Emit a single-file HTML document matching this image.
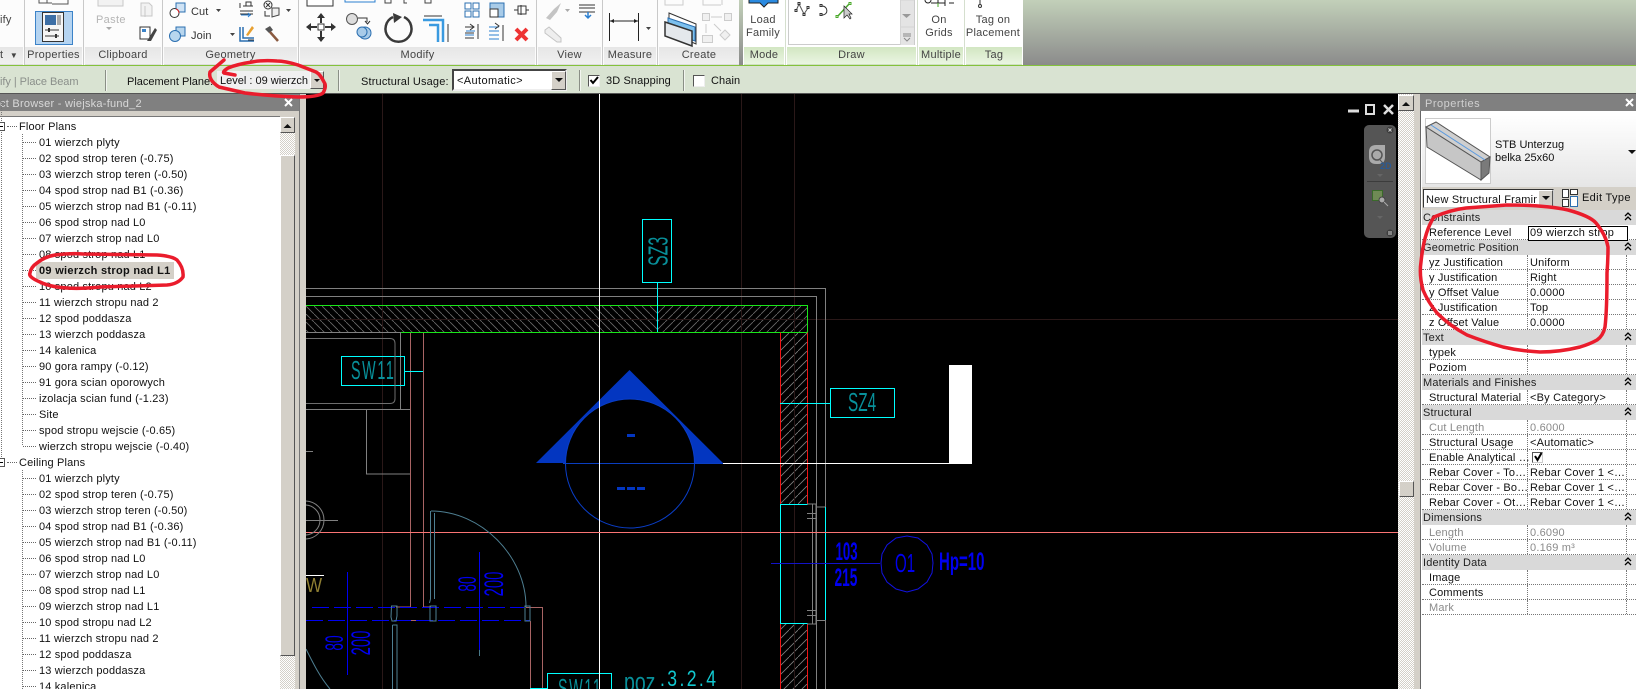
<!DOCTYPE html>
<html><head><meta charset="utf-8"><style>
html,body{margin:0;padding:0;width:1636px;height:689px;overflow:hidden;background:#d4d0c8}
body{position:relative;font:11px/14px "Liberation Sans",sans-serif;letter-spacing:.16px;color:#111}
.a,.p,.l,.x{position:absolute;white-space:nowrap}
.p{top:47px;height:17px;background:linear-gradient(#e6e6e6,#f0f0f0);border-bottom:1px solid #ddd;color:#444;text-align:center;line-height:17px;letter-spacing:.25px}
.g{background:linear-gradient(#d2e6c2,#eaf5e2);border-bottom:1px solid #cfe0c2}
.l{color:#444;transform:translateX(-50%);letter-spacing:.25px}
.sep{position:absolute;top:70px;height:21px;width:1px;background:#8a8f86;border-right:1px solid #f2f5ef}
.dither{position:absolute;background:repeating-conic-gradient(#d4d0c8 0 25%,#fff 0 50%) 0 0/2px 2px}
.btn{position:absolute;background:#d4d0c8;border:1px solid;border-color:#fff #555 #555 #fff;box-sizing:border-box}
.tree{position:absolute;left:0;top:119px;width:280px;height:570px;overflow:hidden}
.t{height:16px;line-height:16px;padding-left:39px;position:relative;white-space:nowrap}
.t:before{content:"";position:absolute;left:23px;top:7px;width:13px;border-top:1px dotted #666}
.h{padding-left:19px}
.h:before{left:7px;width:10px}
.s{background:#d4d0c8;box-shadow:0 -1px 0 #d4d0c8;font-weight:bold;padding:0 3px 0 3px;margin-left:-3px;display:inline-block;letter-spacing:.3px}
.tbl{position:absolute;left:1422px;top:210px;width:214px}
.r{height:15px;position:relative;background:#fff;white-space:nowrap;line-height:17px;box-sizing:border-box;border-bottom:1px dotted #777}
.r.c{background:#d9d9d9;border:0;padding-left:1px;color:#222}
.r i{position:absolute;left:7px;font-style:normal}
.r u{position:absolute;left:105px;width:96px;height:14px;padding-left:2px;border-left:1px dotted #777;border-right:1px dotted #777;text-decoration:none;overflow:hidden;letter-spacing:.2px}
.d{color:#8a8a8a}
</style></head><body>

<!-- ribbon backdrop -->
<div class="a" style="left:0;top:0;width:1636px;height:65px;background:linear-gradient(#c2d0b9,#8b8b8b)"></div>
<div class="a" style="left:0;top:0;width:739px;height:65px;background:#fcfcfc"></div>
<div class="a" style="left:743px;top:0;width:280px;height:65px;background:#fff"></div>
<div class="a" style="left:0;top:65px;width:1636px;height:1px;background:#84c23c"></div>

<!-- panel separators -->
<div class="a" style="left:24px;top:0;width:1px;height:65px;background:#c9c9c9"></div>
<div class="a" style="left:83px;top:0;width:1px;height:65px;background:#c9c9c9"></div>
<div class="a" style="left:162px;top:0;width:1px;height:65px;background:#c9c9c9"></div>
<div class="a" style="left:298px;top:0;width:1px;height:65px;background:#c9c9c9"></div>
<div class="a" style="left:536px;top:0;width:1px;height:65px;background:#c9c9c9"></div>
<div class="a" style="left:602px;top:0;width:1px;height:65px;background:#c9c9c9"></div>
<div class="a" style="left:657px;top:0;width:1px;height:65px;background:#c9c9c9"></div>
<div class="a" style="left:785px;top:0;width:1px;height:65px;background:#d5dfce"></div>
<div class="a" style="left:917px;top:0;width:1px;height:65px;background:#d5dfce"></div>
<div class="a" style="left:964px;top:0;width:1px;height:65px;background:#d5dfce"></div>

<!-- panel labels -->
<div class="p" style="left:0;width:23px;text-align:left">t &nbsp;<span style="font-size:8px">▼</span></div>
<div class="p" style="left:25px;width:57px">Properties</div>
<div class="p" style="left:85px;width:76px">Clipboard</div>
<div class="p" style="left:164px;width:133px">Geometry</div>
<div class="p" style="left:300px;width:235px">Modify</div>
<div class="p" style="left:538px;width:63px">View</div>
<div class="p" style="left:604px;width:52px">Measure</div>
<div class="p" style="left:659px;width:80px">Create</div>
<div class="p g" style="left:744px;width:40px">Mode</div>
<div class="p g" style="left:787px;width:129px">Draw</div>
<div class="p g" style="left:919px;width:44px">Multiple</div>
<div class="p g" style="left:966px;width:56px">Tag</div>

<!-- ribbon texts -->
<div class="x" style="left:0;top:13px;color:#444">ify</div>
<div class="x" style="left:96px;top:13px;color:#b5b5b5;letter-spacing:.35px">Paste</div>
<div class="x" style="left:191px;top:5px;color:#333;letter-spacing:.1px">Cut</div>
<div class="x" style="left:191px;top:29px;color:#333;letter-spacing:.1px">Join</div>
<div class="l" style="left:763px;top:13px">Load</div>
<div class="l" style="left:763px;top:26px">Family</div>
<div class="l" style="left:939px;top:13px">On</div>
<div class="l" style="left:939px;top:26px">Grids</div>
<div class="l" style="left:993px;top:13px">Tag on</div>
<div class="l" style="left:993px;top:26px">Placement</div>

<!-- Draw gallery -->
<div class="a" style="left:788px;top:-2px;width:125px;height:45px;border:1px solid #ccc;background:#fff"></div>
<div class="a" style="left:900px;top:0;width:14px;height:45px;background:#e4e4e4"></div>

<!-- ribbon icons -->
<svg class="a" style="left:0;top:0" width="1030" height="66" viewBox="0 0 1030 66" fill="none">
  <!-- properties -->
  <rect x="35.500" y="11.500" width="37" height="33" fill="#b5d4f1" stroke="#3c83c8"/>
  <rect x="42.500" y="12.500" width="21" height="29" fill="#f5f5f5" stroke="#333"/>
  <rect x="45" y="15" width="11" height="10" fill="#3c6ea5"/>
  <rect x="57" y="15" width="4" height="10" fill="#aaa"/>
  <path d="M45 30h14M45 36h14" stroke="#333"/><rect x="48" y="28" width="2" height="4" fill="#333"/><rect x="55" y="34" width="2" height="4" fill="#333"/>
  <path d="M39 0v3h8v-3M52 4h16v-4M47 3h5" stroke="#555"/>
  <!-- clipboard -->
  <path d="M98 0v6h25v-6" stroke="#c8c8c8" fill="#f2f2f2"/>
  <path d="M109 27l-3 3h6z" fill="#aaa" transform="rotate(180 109 28.500)"/>
  <path d="M141 3h8l3 3v10h-11zM145 6v11" stroke="#c8c8c8" fill="#f2f2f2"/>
  <rect x="140" y="27" width="10" height="12" fill="#fff" stroke="#333"/><rect x="142" y="29" width="4" height="3" fill="#3c83c8"/>
  <path d="M147 41l8-13 2 2-6 11z" fill="#444"/>
  <!-- geometry -->
  <rect x="176" y="3" width="9" height="9" fill="#cfe3f5" stroke="#2b6fb0"/><circle cx="174.500" cy="13" r="4.500" fill="#fff" stroke="#333"/><path d="M176 9a4.500 4.500 0 0 1 3 4" stroke="#d22"/>
  <rect x="176" y="27" width="9" height="9" fill="#b8d6ee" stroke="#2b6fb0"/><circle cx="175" cy="36" r="5.500" fill="#b8d6ee" stroke="#2b6fb0"/>
  <path d="M216 9h5l-2.500 3zM230 33h5l-2.500 3z" fill="#444"/>
  <path d="M240 3v5M243 6h10M240 11h13M240 14h13" stroke="#333"/><path d="M241 15h10M248 13l2 2-2 2" stroke="#2b7fd0"/>
  <rect x="246" y="2" width="5" height="4" stroke="#333"/>
  <circle cx="268" cy="5" r="4" stroke="#333"/><path d="M266 3l4 4M270 3l-4 4M265 11v5h5" stroke="#333"/><path d="M272 8l7 0v7l-7 2z" stroke="#444" fill="#eee"/><path d="M286 9h5l-2.500 3z" fill="#444"/>
  <path d="M240 27v14h14M243 27v11h11" stroke="#2b6fb0" stroke-width="1.500"/><path d="M246 35l6-9 2 2-6 8z" fill="#e8a030"/><path d="M248 40h6" stroke="#333"/>
  <path d="M265 29l5-3 3 4-4 3z" fill="#555"/><path d="M270 32l8 9" stroke="#8a5a40" stroke-width="2.500"/>
  <!-- modify top cut -->
  <path d="M307 0v6h26v-6" stroke="#333" fill="#fff"/>
  <path d="M345 0v2h30v-2" stroke="#2b7fd0"/>
  <path d="M385 0v3h6v-3M404 0v3h3M425 0v3h6v-3" stroke="#444"/>
  <!-- move -->
  <path d="M321 13l4 5h-8zM321 42l4-5h-8zM306 27l5-4v8zM336 27l-5-4v8z" fill="#333"/>
  <path d="M321 17v6M321 31v6M310 27h7M325 27h7" stroke="#333" stroke-width="2"/>
  <rect x="318" y="24" width="6" height="6" fill="#fff" stroke="#333"/>
  <!-- copy -->
  <circle cx="352" cy="19" r="5.500" fill="#ddd" stroke="#555"/><circle cx="365" cy="33" r="6" fill="#a8cbe8" stroke="#2b6fb0"/><circle cx="362" cy="32" r="5" fill="#a8cbe8" stroke="#2b6fb0"/>
  <path d="M358 18h9v4M365 21l2.500 3 2.500-3" stroke="#333"/>
  <!-- rotate -->
  <path d="M404 17a13 13 0 1 1-11 0" stroke="#3a3a3a" stroke-width="2.500"/><path d="M393 13l9 4-8 6z" fill="#3a3a3a"/>
  <!-- trim -->
  <path d="M423 20h20v22M429 25h9v17" stroke="#3a9ae0" stroke-width="2.500"/><path d="M424 16h18M448 42v-18" stroke="#333"/>
  <!-- small -->
  <g stroke="#2b6fb0" fill="#fff"><rect x="465" y="3" width="6" height="6"/><rect x="473" y="3" width="6" height="6"/><rect x="465" y="11" width="6" height="6"/><rect x="473" y="11" width="6" height="6"/></g>
  <rect x="490" y="3" width="14" height="14" fill="#a8cbe8" stroke="#2b6fb0"/><rect x="490" y="9" width="8" height="8" fill="#fff" stroke="#333"/>
  <path d="M514 10h4M526 10h3M521 5v10" stroke="#333"/><rect x="518" y="6" width="8" height="8" stroke="#333"/>
  <path d="M465 27h9M465 38h9M478 24v15M470 30l4-3-4-3M465 33h9" stroke="#333"/><path d="M466 31h9M465 35h9" stroke="#2b7fd0"/>
  <path d="M489 27h10M489 31h10M489 35h10M489 39h10" stroke="#2b7fd0"/><path d="M503 25v16" stroke="#333"/><path d="M495 29l4-3-4-3" stroke="#333"/>
  <path d="M516 29l11 11M527 29l-11 11" stroke="#e33" stroke-width="4"/>
  <!-- view -->
  <path d="M546 18l8-9 7-6-4 9-7 8z" fill="#c4c4c4"/><path d="M565 9h5l-2.500 3z" fill="#aaa"/>
  <path d="M579 5h16M579 8h16M579 12h16" stroke="#333"/><path d="M588 12v6M585 15l3 3 3-3" stroke="#2b7fd0" stroke-width="1.500"/>
  <path d="M545 30l4-3 12 11v4h-4l-12-9z" fill="#eee" stroke="#c4c4c4"/>
  <!-- measure -->
  <path d="M609.500 13v28M638.500 13v28M610 21h28" stroke="#222"/><path d="M610 21l4-2v4zM638 21l-4-2v4z" fill="#222"/>
  <path d="M646 27h5l-2.500 3z" fill="#444"/>
  <!-- create -->
  <path d="M665 0v5h18v-5M703 0v5h18M722 0v5" stroke="#ccc"/>
  <path d="M669 13l27 11v20l-27-12z" fill="#fff" stroke="#333"/>
  <path d="M668 18l27 9v14l-27-10z" fill="#7cc0ee" stroke="#2b6fb0"/>
  <path d="M665 22l27 9v15l-27-10z" fill="#e4e8ec" stroke="#333" stroke-width="1.500"/>
  <g stroke="#ccc" fill="#f0f0f0"><rect x="702.500" y="13.500" width="7" height="7"/><rect x="724.500" y="13.500" width="7" height="7"/><rect x="702.500" y="35.500" width="10" height="7"/><path d="M725 30l5 5-5 5-5-5z"/></g>
  <path d="M711 17h11M706 24v9M714 24l7 7" stroke="#ccc"/>
  <!-- mode -->
  <path d="M749 0v3h11l4 4 4-4h10v-3" fill="#2b8ae0" stroke="#222"/>
  <!-- draw -->
  <path d="M796 11l3-7 5 10 4-6" stroke="#555"/><g fill="#fff" stroke="#333"><rect x="795" y="9.500" width="2" height="2"/><rect x="798" y="2.500" width="2" height="2"/><rect x="803" y="13.500" width="2" height="2"/><rect x="807" y="6.500" width="2" height="2"/><rect x="820" y="4.500" width="2" height="2"/><rect x="820" y="13.500" width="2" height="2"/></g>
  <path d="M822 6c6 0 7 9 0 9" stroke="#333"/>
  <path d="M837 17l13-14" stroke="#4aa82a" stroke-width="1.500"/><g fill="#fff" stroke="#4aa82a"><rect x="836" y="15.500" width="2" height="2"/><rect x="849" y="2.500" width="2" height="2"/></g>
  <path d="M844 6v12l3-3 3 4 1-1-2-4h3z" fill="#ccc" stroke="#222" stroke-width=".7"/>
  <path d="M902 14h9l-4.500 4z" fill="#999"/><path d="M903 34h8M903 36h8M904 38l3 3 3-3" stroke="#888"/>
  <path d="M900.500 0v45M900 0h14M900 27h14" stroke="#d5d5d5"/>
  <!-- multiple -->
  <path d="M925 0a3 3 0 0 0 6 0M931 3h14M938 0v3M945 0v6M949 3h5" stroke="#222"/><path d="M938 3v4" stroke="#4aa82a"/>
  <!-- tag -->
  <path d="M980 0v6" stroke="#333"/><circle cx="980" cy="6" r="1.500" stroke="#333" fill="#fff"/>
</svg>

<!-- options bar -->
<div class="a" style="left:0;top:66px;width:1636px;height:27px;background:#d9e3d2;border-bottom:1px solid #555;box-sizing:content-box"></div>
<div class="x" style="left:0;top:75px;color:#8a8f8a;letter-spacing:-.05px">ify | Place Beam</div>
<div class="sep" style="left:105px"></div>
<div class="x" style="left:127px;top:75px;letter-spacing:0">Placement Plane:</div>
<div class="a" style="left:217px;top:71px;width:107px;height:18px;background:#f0f0f0"></div>
<div class="x" style="left:220px;top:74px;letter-spacing:0">Level : 09 wierzch</div>
<div class="btn" style="left:310px;top:71px;width:14px;height:18px"></div>
<div class="sep" style="left:338px"></div>
<div class="x" style="left:361px;top:75px">Structural Usage:</div>
<div class="a" style="left:452px;top:69px;width:115px;height:22px;background:#fff;box-sizing:border-box;border:2px solid #444;border-right-color:#eee;border-bottom-color:#eee"></div>
<div class="x" style="left:457px;top:74px;letter-spacing:.38px">&lt;Automatic&gt;</div>
<div class="btn" style="left:551px;top:71px;width:15px;height:19px"></div>
<div class="sep" style="left:579px"></div>
<div class="a" style="left:588px;top:75px;width:12px;height:12px;background:#fff;border:1px solid #555;border-right-color:#eee;border-bottom-color:#eee;box-sizing:border-box"></div>
<div class="x" style="left:606px;top:74px;letter-spacing:.12px">3D Snapping</div>
<div class="sep" style="left:683px"></div>
<div class="a" style="left:693px;top:75px;width:12px;height:12px;background:#fff;border:1px solid #555;border-right-color:#eee;border-bottom-color:#eee;box-sizing:border-box"></div>
<div class="x" style="left:711px;top:74px;letter-spacing:.1px">Chain</div>

<!-- project browser -->
<div class="a" style="left:0;top:94px;width:300px;height:17px;background:#808080"></div>
<div class="x" style="left:0;top:97px;color:#d8d8d8;letter-spacing:.25px">ct Browser - wiejska-fund_2</div>
<div class="a" style="left:0;top:116px;width:280px;height:573px;background:#fff;border-top:1px solid #777;box-sizing:border-box"></div>
<div class="dither" style="left:280px;top:117px;width:15px;height:572px"></div>
<div class="btn" style="left:280px;top:117px;width:15px;height:16px"></div>
<div class="btn" style="left:280px;top:155px;width:15px;height:501px"></div>
<div class="a" style="left:299px;top:94px;width:1px;height:595px;background:#777"></div>

<div class="tree">
<div class="t h">Floor Plans</div>
<div class="t">01 wierzch plyty</div>
<div class="t">02 spod strop teren (-0.75)</div>
<div class="t">03 wierzch strop teren (-0.50)</div>
<div class="t">04 spod strop nad B1 (-0.36)</div>
<div class="t">05 wierzch strop nad B1 (-0.11)</div>
<div class="t">06 spod strop nad L0</div>
<div class="t">07 wierzch strop nad L0</div>
<div class="t">08 spod strop nad L1</div>
<div class="t"><span class="s">09 wierzch strop nad L1</span></div>
<div class="t">10 spod stropu nad L2</div>
<div class="t">11 wierzch stropu nad 2</div>
<div class="t">12 spod poddasza</div>
<div class="t">13 wierzch poddasza</div>
<div class="t">14 kalenica</div>
<div class="t">90 gora rampy (-0.12)</div>
<div class="t">91 gora scian oporowych</div>
<div class="t">izolacja scian fund (-1.23)</div>
<div class="t">Site</div>
<div class="t">spod stropu wejscie (-0.65)</div>
<div class="t">wierzch stropu wejscie (-0.40)</div>
<div class="t h">Ceiling Plans</div>
<div class="t">01 wierzch plyty</div>
<div class="t">02 spod strop teren (-0.75)</div>
<div class="t">03 wierzch strop teren (-0.50)</div>
<div class="t">04 spod strop nad B1 (-0.36)</div>
<div class="t">05 wierzch strop nad B1 (-0.11)</div>
<div class="t">06 spod strop nad L0</div>
<div class="t">07 wierzch strop nad L0</div>
<div class="t">08 spod strop nad L1</div>
<div class="t">09 wierzch strop nad L1</div>
<div class="t">10 spod stropu nad L2</div>
<div class="t">11 wierzch stropu nad 2</div>
<div class="t">12 spod poddasza</div>
<div class="t">13 wierzch poddasza</div>
<div class="t">14 kalenica</div>
</div>

<!-- canvas scrollbar -->
<div class="dither" style="left:1398px;top:94px;width:16px;height:595px"></div>
<div class="btn" style="left:1398px;top:95px;width:16px;height:16px"></div>
<div class="btn" style="left:1399px;top:481px;width:15px;height:16px"></div>

<!-- properties -->
<div class="a" style="left:1420px;top:94px;width:216px;height:17px;background:#808080"></div>
<div class="x" style="left:1425px;top:97px;color:#d0d0d0;letter-spacing:.5px">Properties</div>
<div class="a" style="left:1420px;top:111px;width:1px;height:578px;background:#666"></div>
<div class="a" style="left:1421px;top:111px;width:215px;height:578px;background:#fff"></div>
<div class="a" style="left:1422px;top:115px;width:214px;height:72px;background:linear-gradient(#fff,#e6e6e6)"></div>
<div class="a" style="left:1422px;top:187px;width:214px;height:23px;background:#d4d0c8"></div>
<div class="a" style="left:1425px;top:118px;width:66px;height:66px;background:#fff;border:1px solid #ccc;box-sizing:border-box"></div>
<div class="x" style="left:1495px;top:138px;letter-spacing:0">STB Unterzug</div>
<div class="x" style="left:1495px;top:151px;letter-spacing:0">belka 25x60</div>
<div class="a" style="left:1423px;top:189px;width:131px;height:19px;background:#fff;border:1px solid #333;border-right-color:#ccc;border-bottom-color:#ccc;box-sizing:border-box"></div>
<div class="x" style="left:1426px;top:193px;width:111px;overflow:hidden;letter-spacing:.2px">New Structural Framing</div>
<div class="btn" style="left:1538px;top:190px;width:15px;height:17px"></div>
<div class="x" style="left:1582px;top:191px;letter-spacing:.35px">Edit Type</div>

<div class="tbl">
<div class="r c">Constraints</div>
<div class="r"><i>Reference Level</i></div>
<div class="r c">Geometric Position</div>
<div class="r"><i>yz Justification</i><u>Uniform</u></div>
<div class="r"><i>y Justification</i><u>Right</u></div>
<div class="r"><i>y Offset Value</i><u>0.0000</u></div>
<div class="r"><i>z Justification</i><u>Top</u></div>
<div class="r"><i>z Offset Value</i><u>0.0000</u></div>
<div class="r c">Text</div>
<div class="r"><i>typek</i><u></u></div>
<div class="r"><i>Poziom</i><u></u></div>
<div class="r c">Materials and Finishes</div>
<div class="r"><i>Structural Material</i><u>&lt;By Category&gt;</u></div>
<div class="r c">Structural</div>
<div class="r d"><i>Cut Length</i><u>0.6000</u></div>
<div class="r"><i>Structural Usage</i><u>&lt;Automatic&gt;</u></div>
<div class="r"><i>Enable Analytical …</i><u></u></div>
<div class="r"><i>Rebar Cover - To…</i><u>Rebar Cover 1 &lt;…</u></div>
<div class="r"><i>Rebar Cover - Bo…</i><u>Rebar Cover 1 &lt;…</u></div>
<div class="r"><i>Rebar Cover - Ot…</i><u>Rebar Cover 1 &lt;…</u></div>
<div class="r c">Dimensions</div>
<div class="r d"><i>Length</i><u>0.6090</u></div>
<div class="r d"><i>Volume</i><u>0.169 m³</u></div>
<div class="r c">Identity Data</div>
<div class="r"><i>Image</i><u></u></div>
<div class="r"><i>Comments</i><u></u></div>
<div class="r d"><i>Mark</i><u></u></div>
</div>
<div class="a" style="left:1528px;top:226px;width:97px;height:13px;border:1px solid #000;background:#fff;box-sizing:content-box;overflow:hidden;white-space:nowrap;line-height:13px;padding-left:1px;letter-spacing:.25px">09 wierzch strop</div>
<div class="a" style="left:1532px;top:452px;width:11px;height:11px;background:#fff;border:1px solid #555;border-right-color:#ccc;border-bottom-color:#ccc;box-sizing:border-box"></div>

<!-- drawing canvas -->
<svg class="a" style="left:306px;top:94px;letter-spacing:0" width="1092" height="595" viewBox="306 94 1092 595" fill="none">
<defs>
  <pattern id="h1" width="8" height="8" patternUnits="userSpaceOnUse" patternTransform="translate(306 306)"><path d="M0 0l8 8" stroke="#6a6a6a" stroke-width=".8"/></pattern>
  <pattern id="h2" width="8" height="8" patternUnits="userSpaceOnUse" patternTransform="translate(657 306)"><path d="M8 0l-8 8" stroke="#6a6a6a" stroke-width=".8"/></pattern>
  <pattern id="h3" width="9" height="9" patternUnits="userSpaceOnUse" patternTransform="translate(780 333)"><path d="M9 0l-9 9" stroke="#808080" stroke-width=".8"/></pattern>
</defs>
<rect x="306" y="94" width="1092" height="595" fill="#000"/>

<!-- hatches -->
<rect x="306" y="306" width="351" height="27" fill="url(#h1)"/>
<rect x="657" y="306" width="150" height="27" fill="url(#h2)"/>
<rect x="781" y="333" width="26" height="171" fill="url(#h3)"/>
<rect x="781" y="624" width="26" height="65" fill="url(#h3)"/>

<g shape-rendering="crispEdges">
<!-- dark grid -->
<path d="M382.500 94v595M741.500 94v595M794.500 94v595M306 319.500h1092" stroke="#2a1818"/>
<!-- gray walls -->
<path d="M306 288.500h519.500V689M306 296.500h510.500V689" stroke="#808080"/>
<path d="M306 332.500h95M400.500 332v77M306 409.500h104M366.500 409v65h44M306 451.500h7" stroke="#808080"/>
<!-- browns -->
<path d="M410.500 333v274H396M423.500 333v274H431M396 620.500h34M526 607.500h16.500V689M530.500 621v68" stroke="#a86464"/>
<!-- green beam -->
<path d="M306 305.500h501.500v27H401" stroke="#19e619"/>
<!-- red -->
<path d="M780.500 332.500V504M780.500 624V689M807.500 332.500V504M807.500 624V689" stroke="#f01414"/>
<!-- window -->
<path d="M807 504h9v120h-9M812.500 504v120M807 513.500h9M807 518.500h9M807 610.500h9M807 615.500h9M816 507h9.500M816 620.500h9.500" stroke="#808080"/>
<path d="M780.500 504.500h27M780.500 504v120M780.500 623.500h27M825.500 507v113" stroke="#0ff"/>
<!-- tags -->
<path d="M642.500 219.500h29v63h-29zM657.500 283v49M341.500 356.500h63v29h-63zM405 371.500h18M830.500 388.500h64v29h-64zM780 403.500h50M547.500 689v-15.500h64V689M530 688.500h18" stroke="#0ff"/>
</g>

<!-- rounded room -->
<path d="M306 338.500h84q5 0 5 5v55q0 5-5 5h-84" stroke="#6e6e6e"/>

<!-- section symbol -->
<path d="M629.500 370L723 463H536z" fill="#0336c0"/>
<circle cx="630" cy="463.500" r="64.500" fill="#000"/>
<circle cx="630" cy="463.500" r="64.500" stroke="#0a3ec8"/>
<g shape-rendering="crispEdges">
<path d="M563 463.500h160" stroke="#0a3ec0"/>
<path d="M723 463.500h226" stroke="#fff"/>
<rect x="949" y="365" width="23" height="99" fill="#fff"/>
<path d="M627 435.500h8M617 488.500h8M627 488.500h8M637 488.500h8" stroke="#0336c0" stroke-width="3"/>
<path d="M599.500 94v595" stroke="#fff"/>
<path d="M306 532.500h1092" stroke="#fa7474"/>
<path d="M312 607.500h212" stroke="#0000f0" stroke-dasharray="17 5"/>
<path d="M306 620.500h224" stroke="#0000f0" stroke-dasharray="17 5"/>
<path d="M347.500 572v103M479.500 552v98" stroke="#0000f0"/>
<path d="M479.500 650v6" stroke="#4a7a8a"/>
<path d="M771 563.500h109" stroke="#1212c8"/>
<path d="M306 575.500h18" stroke="#fff"/>
</g>

<!-- door -->
<path d="M431 511c50 0 95 45 95 96" stroke="#4e7f92"/>
<path d="M430.500 511v88l-1 4M434.500 513v86M430 606h6v15h-6zM525 606h5v15h-5zM391.500 606h5.500v10l-1 5h-4l-1-4zM392.500 625h4.500v64M392.500 625v64M306 649c8 16 14 28 24 40" stroke="#4e7f92"/>

<!-- grid bubble -->
<circle cx="305" cy="520" r="19" stroke="#808080"/><circle cx="305" cy="520" r="15" stroke="#808080"/><path d="M306 520.500h32" stroke="#808080"/>

<!-- annotation text -->
<g font-family="Liberation Sans" fill="#08909a">
<text transform="translate(667.500 266) rotate(-90) scale(.57 1)" font-size="28">SZ3</text>
<text transform="translate(351 379) scale(.55 1)" font-size="26" letter-spacing="3">SW11</text>
<text transform="translate(848 411) scale(.59 1)" font-size="26">SZ4</text>
<text transform="translate(558 697) scale(.55 1)" font-size="26" letter-spacing="3">SW11</text>
<text transform="translate(624 691) scale(.75 1)" font-size="26">poz</text>
<text transform="translate(660 686) scale(.8 1)" font-size="22" letter-spacing="3" fill="#12c8d0">.3.2.4</text>
</g>
<text transform="translate(306 592) scale(.85 1)" font-size="20" font-family="Liberation Sans" fill="#8f7f32">W</text>
<g font-family="Liberation Sans" fill="#0000f0">
<text transform="translate(343 643) rotate(-90) scale(.55 1)" font-size="25" text-anchor="middle">80</text>
<text transform="translate(370 643) rotate(-90) scale(.55 1)" font-size="27" text-anchor="middle">200</text>
<text transform="translate(476 584) rotate(-90) scale(.55 1)" font-size="25" text-anchor="middle">80</text>
<text transform="translate(503 584) rotate(-90) scale(.55 1)" font-size="27" text-anchor="middle">200</text>
<text transform="translate(835.500 560) scale(.53 1)" font-size="25" font-weight="bold">103</text>
<text transform="translate(834.500 586) scale(.55 1)" font-size="25" font-weight="bold">215</text>
<text transform="translate(895 572) scale(.58 1)" font-size="26">O1</text>
<text transform="translate(939 570) scale(.6 1)" font-size="25" font-weight="bold">Hp=10</text>
</g>
<path d="M907 536l11 2 9 7 5 9 1 9-1 10-5 9-9 7-11 3-11-3-9-7-5-9-1-10 1-9 5-9 9-7z" stroke="#1212e0"/>

<!-- window controls -->
<path d="M1348 111h11" stroke="#ddd" stroke-width="3"/>
<rect x="1366" y="105" width="8" height="9" stroke="#ddd" stroke-width="2"/>
<path d="M1384 105l9 9M1393 105l-9 9" stroke="#ddd" stroke-width="2.500"/>
<!-- nav bar -->
<rect x="1364" y="125" width="32" height="113" rx="5" fill="#555"/>
<circle cx="1390" cy="130" r="3.500" fill="#3c3c3c"/><path d="M1388.500 128.500l3 3M1391.500 128.500l-3 3" stroke="#ccc"/>
<path d="M1369 152q0-7 7-7h9v12q0 7-7 7h-2q-7 0-7-7z" fill="#aaa"/>
<circle cx="1377" cy="155" r="5" stroke="#555" stroke-width="1.500"/><path d="M1380 160l3 3" stroke="#555"/>
<text x="1380" y="169" font-size="9" font-weight="bold" font-family="Liberation Sans" fill="#2a5a94">2D</text>
<path d="M1377 174h6l-3 3z" fill="#666"/>
<path d="M1367 181.500h26" stroke="#3c3c3c"/>
<rect x="1372.500" y="190.500" width="10" height="10" fill="#6f8a55" stroke="#3a6a2a"/>
<circle cx="1382" cy="200" r="3" fill="#aaa" stroke="#444"/><path d="M1384 202l4 4" stroke="#aaa"/>
<path d="M1377 216h6l-3 3z" fill="#666"/>
<circle cx="1390" cy="233" r="3.500" fill="#3c3c3c"/><path d="M1388 232h4M1388 234h4" stroke="#ccc"/>
</svg>

<!-- overlay: arrows, beam, red marks -->
<svg class="a" style="left:0;top:0" width="1636" height="689" viewBox="0 0 1636 689" fill="none">
<!-- dropdown arrows & tree marks -->
<path d="M314 79h6l-3 3zM555 78h8l-4 4zM1542 196h8l-4 4zM1628 150h8l-4 4z" fill="#111"/>
<path d="M283.500 128h8l-4-4z" fill="#111"/>
<path d="M1402 106h8l-4-4z" fill="#111"/>
<path d="M590.500 80l2.500 3 5-6" stroke="#000" stroke-width="2"/>
<path d="M1535 456l2.500 4 4-7" stroke="#000" stroke-width="2"/>
<path d="M285 99l7 7M292 99l-7 7M1626 99l7 7M1633 99l-7 7" stroke="#fff" stroke-width="2"/>
<!-- tree dotted -->
<path d="M22.500 134v312M22.500 470v219M1.500 100v362" stroke="#777" stroke-dasharray="1 1"/>
<g stroke="#555" fill="#fff"><rect x="-3.500" y="122.500" width="8" height="8"/><rect x="-3.500" y="458.500" width="8" height="8"/></g>
<path d="M-1 126.500h4M-1 462.500h4" stroke="#000"/>
<!-- beam thumb -->
<path d="M1426 127l55 35v18l-54-33z" fill="#c6c6c6" stroke="#555"/>
<path d="M1426 127l10-5 54 35-9 5z" fill="#cfcfcf" stroke="#555"/>
<path d="M1481 162l9-5-1 16-8 7z" fill="#7a7a7a" stroke="#555"/>
<path d="M1431 125l54 35" stroke="#5a9ae0"/>
<!-- edit type icon -->
<g stroke="#333" fill="#fff"><rect x="1562.500" y="189.500" width="6" height="8"/><rect x="1570.500" y="189.500" width="7" height="5"/><rect x="1562.500" y="199.500" width="6" height="7"/><rect x="1570.500" y="196.500" width="7" height="10" stroke="#2b6fb0"/></g>
<!-- chevrons -->
<g stroke="#000" stroke-width="1.300">
<path d="M1625 216l3-3 3 3M1625 220l3-3 3 3"/><path d="M1625 246l3-3 3 3M1625 250l3-3 3 3"/><path d="M1625 336l3-3 3 3M1625 340l3-3 3 3"/><path d="M1625 381l3-3 3 3M1625 385l3-3 3 3"/><path d="M1625 411l3-3 3 3M1625 415l3-3 3 3"/><path d="M1625 516l3-3 3 3M1625 520l3-3 3 3"/><path d="M1625 561l3-3 3 3M1625 565l3-3 3 3"/>
</g>
<!-- red hand marks -->
<g stroke="#ea1c2c" stroke-width="3.500" stroke-linecap="round" stroke-linejoin="round">
<path d="M224 60L210 72Q208 80 219 87L245 93Q270 96 298 97Q318 97 323 93Q327 86 324 82Q320 74 316 72L298 65Q285 61 277 61Q262 60 252 62Q238 64 228 68Q222 72 224 73L235 75"/>
<path d="M55 255Q70 253 83 254L157 255Q172 256 177 260Q184 268 183 277Q178 284 167 285L100 287Q80 289 67 288Q50 287 40 282Q28 277 30 273Q31 267 37 263Q44 257 55 255"/>
<path d="M1421 262Q1424 232 1434 217Q1450 210 1466 208L1507 205Q1545 205 1568 210Q1590 216 1596 223Q1606 235 1608 247Q1608 260 1607 273Q1607 310 1605 327Q1603 336 1597 340Q1590 344 1580 347Q1560 352 1540 352Q1520 351 1503 347Q1485 342 1467 335Q1450 326 1437 313Q1428 302 1423 290Q1419 275 1421 262"/>
</g>
</svg>
</body></html>
